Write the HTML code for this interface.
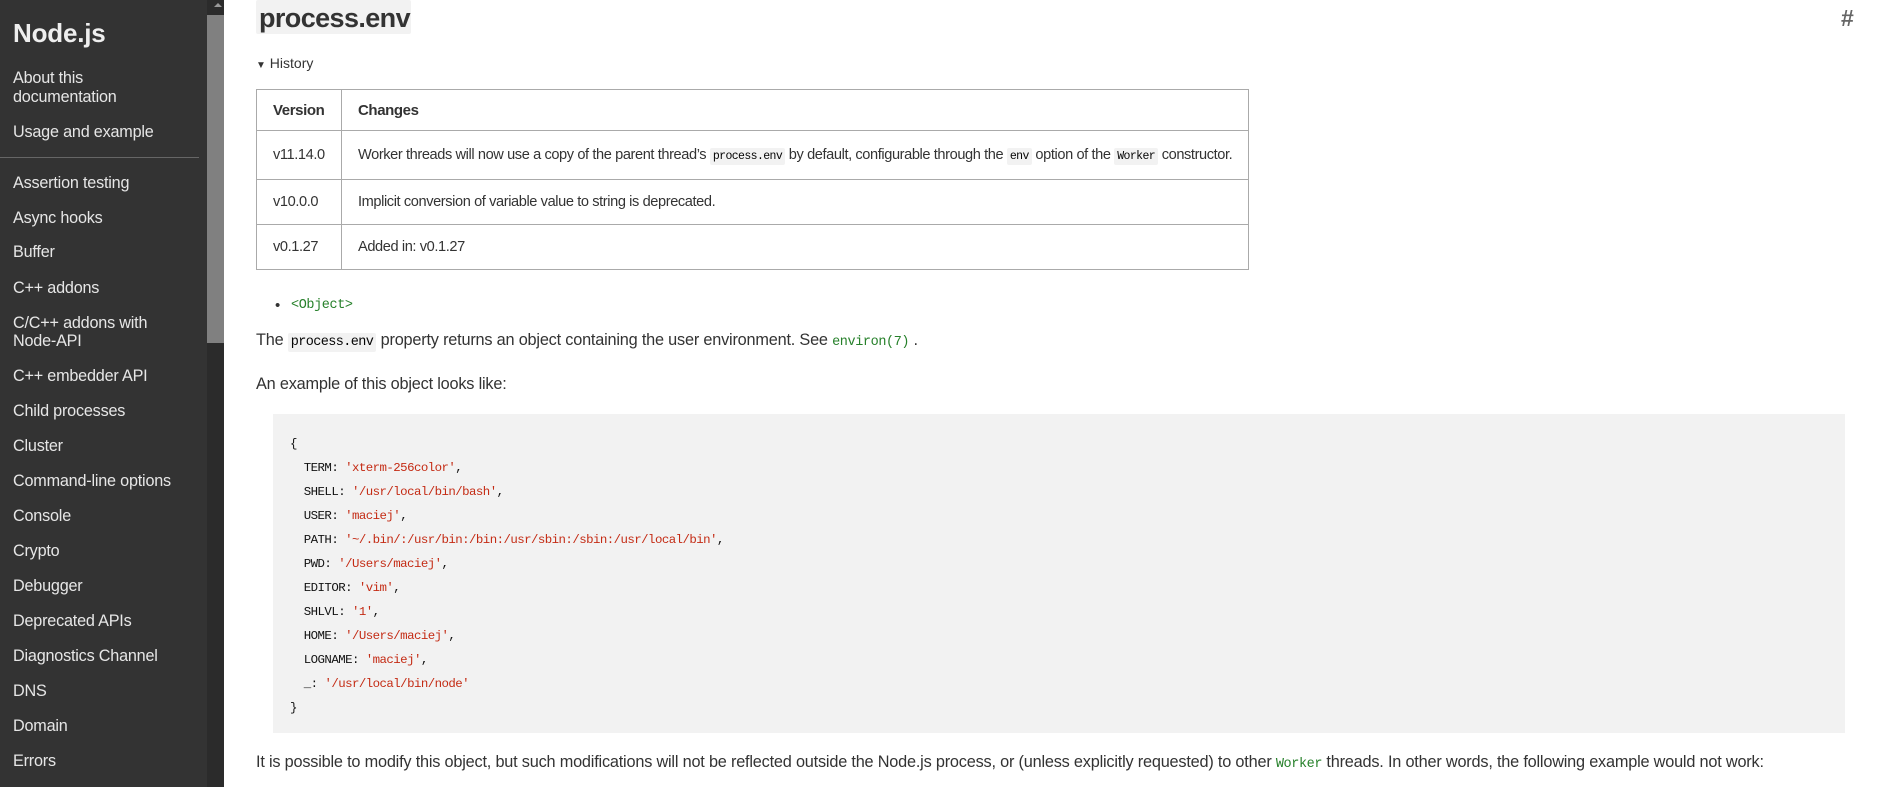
<!DOCTYPE html>
<html><head><meta charset="utf-8"><style>
*{margin:0;padding:0;box-sizing:border-box}
body{width:1894px;height:787px;overflow:hidden;background:#fff;font-family:"Liberation Sans",sans-serif;color:#333;position:relative}
#side{position:absolute;left:0;top:0;width:207px;height:787px;background:#333}
#track{position:absolute;left:207px;top:0;width:17px;height:787px;background:#2b2b2b}
#thumb{position:absolute;left:207px;top:15px;width:17px;height:328px;background:#808080}
.n{position:absolute;left:13px;color:#e6e6e6;font-size:16.2px;line-height:18px;white-space:nowrap;letter-spacing:-0.2px}
.t{position:absolute;white-space:nowrap}
.c{font-family:"Liberation Mono",monospace;font-size:11.5px;letter-spacing:-0.6px;background:#f2f2f2;padding:2px 3px;border-radius:2px;color:#040404}
table{position:absolute;left:256px;top:89px;width:993px;border-collapse:collapse;font-size:14.6px;letter-spacing:-0.4px}
td,th{border:1px solid #aaa;text-align:left;padding:0 0 0 16px;vertical-align:middle}
th{font-size:15px}
pre{position:absolute;left:273px;top:414px;width:1572px;height:319px;background:#f2f2f2;font-family:"Liberation Mono",monospace;font-size:12.4px;letter-spacing:-0.55px;color:#111;padding:18px 17px;line-height:24px}
.s{color:#c42b14}
.p{font-size:16.3px;letter-spacing:-0.2px}
.g{font-family:'Liberation Mono',monospace;font-size:13.5px;letter-spacing:-0.4px;color:#26802a}
</style></head><body>
<div id="side"></div><div id="track"></div><div id="thumb"></div>
<div style="position:absolute;left:214px;top:3px;width:0;height:0;border-left:4px solid transparent;border-right:4px solid transparent;border-bottom:4px solid #999"></div>
<div class="n" style="top:17px;font-size:26px;font-weight:bold;line-height:32px;color:#eee">Node.js</div>
<div class="n" style="top:69px">About this</div>
<div class="n" style="top:88px">documentation</div>
<div class="n" style="top:123px">Usage and example</div>
<div style="position:absolute;left:0;top:157px;width:199px;height:1px;background:#666"></div>
<div class="n" style="top:174px">Assertion testing</div>
<div class="n" style="top:209px">Async hooks</div>
<div class="n" style="top:243px">Buffer</div>
<div class="n" style="top:279px">C++ addons</div>
<div class="n" style="top:314px">C/C++ addons with</div>
<div class="n" style="top:332px">Node-API</div>
<div class="n" style="top:367px">C++ embedder API</div>
<div class="n" style="top:402px">Child processes</div>
<div class="n" style="top:437px">Cluster</div>
<div class="n" style="top:472px">Command-line options</div>
<div class="n" style="top:507px">Console</div>
<div class="n" style="top:542px">Crypto</div>
<div class="n" style="top:577px">Debugger</div>
<div class="n" style="top:612px">Deprecated APIs</div>
<div class="n" style="top:647px">Diagnostics Channel</div>
<div class="n" style="top:682px">DNS</div>
<div class="n" style="top:717px">Domain</div>
<div class="n" style="top:752px">Errors</div>

<div class="t" style="left:256px;top:0;height:34px;width:155px;background:#f2f2f2;border-radius:2px"></div>
<div class="t" style="left:259px;top:1px;font-size:27px;font-weight:bold;color:#333;line-height:34px;letter-spacing:-0.6px">process.env</div>
<div class="t" style="left:1841px;top:5px;font-size:23px;font-weight:bold;color:#666">#</div>
<div class="t" style="left:256px;top:55px;font-size:14px"><span style="font-size:10px">▼</span> History</div>
<table>
<tr style="height:41px"><th style="width:85px">Version</th><th>Changes</th></tr>
<tr style="height:49px"><td>v11.14.0</td><td>Worker threads will now use a copy of the parent thread’s <span class="c">process.env</span> by default, configurable through the <span class="c">env</span> option of the <span class="c">Worker</span> constructor.</td></tr>
<tr style="height:45px"><td>v10.0.0</td><td>Implicit conversion of variable value to string is deprecated.</td></tr>
<tr style="height:45px"><td>v0.1.27</td><td>Added in: v0.1.27</td></tr>
</table>
<div class="t" style="left:275px;top:297px;font-size:15px">•</div>
<div class="t g" style="left:291px;top:298px">&lt;Object&gt;</div>
<div class="t p" style="left:256px;top:331px">The <span class="c" style="font-size:13.5px">process.env</span> property returns an object containing the user environment. See <span class="g">environ(7)</span> .</div>
<div class="t p" style="left:256px;top:375px">An example of this object looks like:</div>
<pre>{
  TERM: <span class="s">'xterm-256color'</span>,
  SHELL: <span class="s">'/usr/local/bin/bash'</span>,
  USER: <span class="s">'maciej'</span>,
  PATH: <span class="s">'~/.bin/:/usr/bin:/bin:/usr/sbin:/sbin:/usr/local/bin'</span>,
  PWD: <span class="s">'/Users/maciej'</span>,
  EDITOR: <span class="s">'vim'</span>,
  SHLVL: <span class="s">'1'</span>,
  HOME: <span class="s">'/Users/maciej'</span>,
  LOGNAME: <span class="s">'maciej'</span>,
  _: <span class="s">'/usr/local/bin/node'</span>
}</pre>
<div class="t p" style="left:256px;top:753px">It is possible to modify this object, but such modifications will not be reflected outside the Node.js process, or (unless explicitly requested) to other <span class="g">Worker</span> threads. In other words, the following example would not work:</div>
</body></html>
